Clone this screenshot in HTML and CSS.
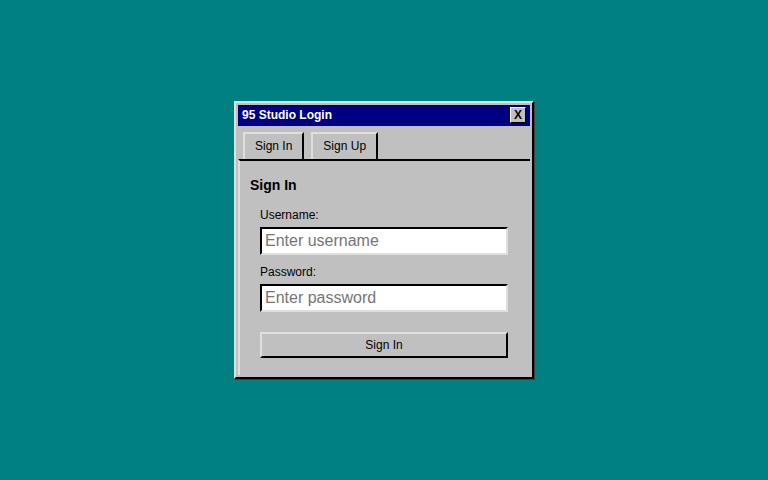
FILE: index.html
```html
<!DOCTYPE html>
<html lang="en">
<head>
<meta charset="utf-8">
<title>95 Studio Login</title>
<link rel="stylesheet" href="styles.css">
</head>
<body>
<div class="desktop">
  <div class="window">
    <div class="titlebar">
      <span class="title">95 Studio Login</span>
      <button class="close" type="button">X</button>
    </div>
    <div class="tabs">
      <button class="tab" type="button">Sign In</button>
      <button class="tab" type="button">Sign Up</button>
    </div>
    <div class="panel">
      <h2 class="heading">Sign In</h2>
      <form class="form">
        <label class="label" for="user">Username:</label>
        <input class="field" id="user" type="text" placeholder="Enter username">
        <label class="label label-second" for="pass">Password:</label>
        <input class="field" id="pass" type="password" placeholder="Enter password">
        <button class="submit" type="button">Sign In</button>
      </form>
    </div>
  </div>
</div>
</body>
</html>
```
FILE: styles.css
```css
* { box-sizing: border-box; }
html, body { margin: 0; padding: 0; }
body {
  background: #008080;
  font-family: "Liberation Sans", Arial, sans-serif;
  color: #000;
}
.desktop {
  width: 100vw;
  height: 100vh;
  display: flex;
  align-items: center;
  justify-content: center;
}
.window {
  width: 300px;
  height: 278px;
  background: #c0c0c0;
  border: 2px solid;
  border-color: #dfdfdf #000 #000 #dfdfdf;
  padding: 2px;
  display: flex;
  flex-direction: column;
  box-shadow: 1px 1px 0 #404040;
}
.titlebar {
  height: 21px;
  background: #000080;
  color: #fff;
  display: flex;
  align-items: center;
  justify-content: space-between;
  padding: 0 4px 1px 4px;
}
.title {
  font-weight: bold;
  font-size: 12px;
}
.close {
  width: 16px;
  height: 16px;
  padding: 0;
  margin: 0;
  background: #c0c0c0;
  border: 1px solid;
  border-color: #fff #000 #000 #fff;
  font-family: "Liberation Sans", Arial, sans-serif;
  font-weight: bold;
  font-size: 12px;
  line-height: 13px;
  color: #000;
}
.tabs {
  display: flex;
  gap: 7px;
  padding: 6px 0 0 5px;
  height: 33px;
}
.tab {
  height: 27px;
  margin: 0;
  padding: 0 10px 2px 10px;
  background: #c0c0c0;
  border: 2px solid;
  border-color: #dfdfdf #000 #c0c0c0 #dfdfdf;
  border-bottom: none;
  font-family: "Liberation Sans", Arial, sans-serif;
  font-size: 12px;
  color: #000;
}
.panel {
  flex: 1;
  border-top: 2px solid #000;
  border-left: 2px solid #dfdfdf;
  padding: 16px 10px 0 10px;
}
.heading {
  margin: 0;
  font-size: 14px;
  line-height: 17px;
  font-weight: bold;
}
.form {
  display: flex;
  flex-direction: column;
  margin: 14px 20px 0 10px;
}
.label {
  font-size: 12px;
  line-height: 14px;
  margin-bottom: 5px;
}
.label-second { margin-top: 10px; }
.field {
  width: 248px;
  height: 28px;
  margin: 0;
  padding: 0 3px;
  background: #fff;
  border: 2px solid;
  border-color: #000 #dfdfdf #dfdfdf #000;
  font-family: "Liberation Sans", Arial, sans-serif;
  font-size: 16px;
  color: #000;
  outline: none;
}
.field::placeholder { color: #757575; }
.submit {
  width: 248px;
  height: 26px;
  margin: 20px 0 0 0;
  padding: 0;
  background: #c0c0c0;
  border: 2px solid;
  border-color: #dfdfdf #000 #000 #dfdfdf;
  font-family: "Liberation Sans", Arial, sans-serif;
  font-size: 12px;
  color: #000;
}
```
